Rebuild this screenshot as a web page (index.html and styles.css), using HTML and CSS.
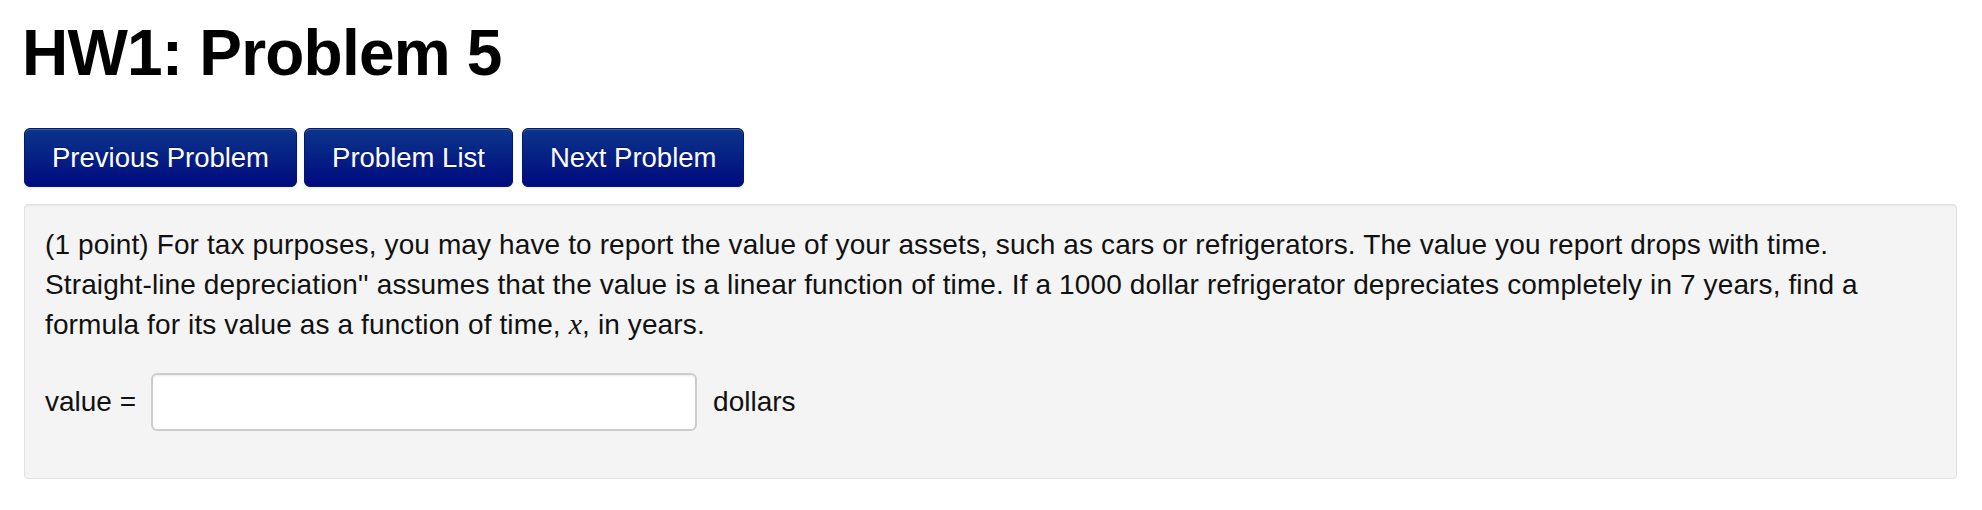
FILE: index.html
```html
<!DOCTYPE html>
<html lang="en">
<head>
<meta charset="utf-8">
<title>HW1: Problem 5</title>
<link rel="stylesheet" href="styles.css">
</head>
<body>
<div class="page">
  <h1 class="title">HW1: Problem 5</h1>
  <div class="nav">
    <a class="btn" href="#">Previous Problem</a>
    <a class="btn" href="#">Problem List</a>
    <a class="btn btn-next" href="#">Next Problem</a>
  </div>
  <div class="well">
    <p class="problem">(1 point) For tax purposes, you may have to report the value of your assets, such as cars or refrigerators. The value you report drops with time. <span class="nowrap">Straight-line</span> depreciation'' assumes that the value is a linear function of time. If a 1000 dollar refrigerator depreciates completely in 7 years, find a formula for its value as a function of time, <span class="math">x</span>, in years.</p>
    <div class="answer">
      <span class="label">value =</span>
      <input class="field" type="text" aria-label="value">
      <span class="unit">dollars</span>
    </div>
  </div>
</div>
</body>
</html>
```
FILE: styles.css
```css
html, body {
  margin: 0;
  padding: 0;
  background: #ffffff;
}

body {
  font-family: "Liberation Sans", Arial, Helvetica, sans-serif;
  color: #111111;
}

.page {
  padding: 18px 25px 0 24px;
}

.title {
  margin: 0 0 40px -2px;
  font-size: 64px;
  line-height: 70px;
  font-weight: bold;
  letter-spacing: -0.8px;
  color: #000000;
}

.nav {
  display: flex;
  gap: 7px;
}

.btn-next {
  margin-left: 2px;
}

.btn {
  display: inline-block;
  box-sizing: border-box;
  height: 59px;
  padding: 0 27px;
  font-size: 27.5px;
  line-height: 57px;
  color: #ffffff;
  text-decoration: none;
  text-shadow: 0 -1px 0 rgba(0, 0, 0, 0.25);
  background-color: #00137f;
  background-image: linear-gradient(to bottom, #0b358b 0%, #000a7e 100%);
  border: 1px solid #001a6a;
  border-radius: 6px;
  box-shadow: inset 0 1px 0 rgba(255, 255, 255, 0.22), 0 1px 2px rgba(0, 0, 0, 0.08);
}

.well {
  margin-top: 17px;
  box-sizing: border-box;
  height: 275px;
  padding: 20px 20px 20px 20px;
  background: #f4f4f4;
  border: 1px solid #e1e1e1;
  border-radius: 4px;
  box-shadow: inset 0 1px 1px rgba(0, 0, 0, 0.05);
}

.problem {
  margin: 0 0 28px 0;
  font-size: 28px;
  line-height: 40px;
  letter-spacing: 0.12px;
}

.nowrap {
  white-space: nowrap;
}

.math {
  font-family: "Liberation Serif", "Times New Roman", serif;
  font-style: italic;
  font-size: 30px;
  line-height: 1;
}

.answer {
  display: flex;
  align-items: center;
  font-size: 28px;
}

.label {
  margin-right: 15px;
}

.field {
  box-sizing: border-box;
  width: 546px;
  height: 58px;
  margin: 0 16px 0 0;
  padding: 6px 12px;
  font: inherit;
  background: #ffffff;
  border: 2px solid #cccccc;
  border-radius: 6px;
  box-shadow: inset 0 1px 2px rgba(0, 0, 0, 0.08);
  outline: none;
}
```
